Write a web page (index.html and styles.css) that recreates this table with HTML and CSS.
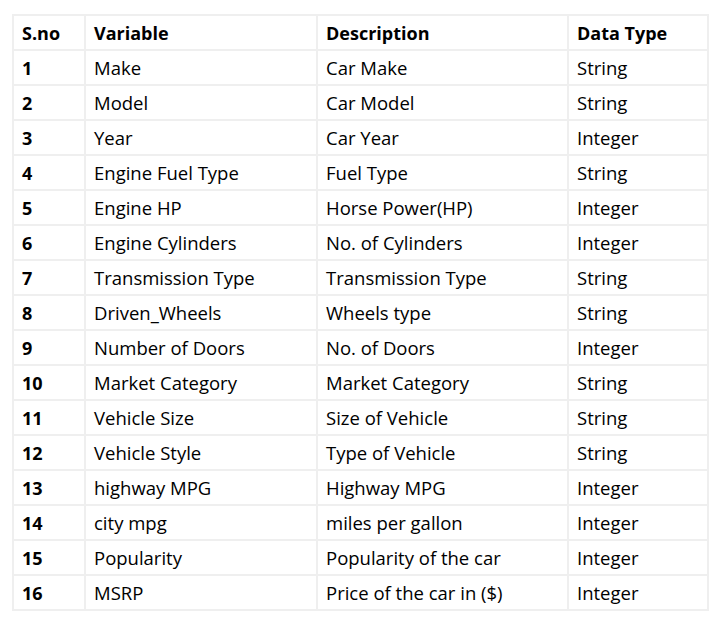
FILE: index.html
```html
<!DOCTYPE html>
<html>
<head>
<meta charset="utf-8">
<link rel="stylesheet" href="styles.css">
</head>
<body>
<table class="vars">
  <colgroup>
    <col class="c-sno"><col class="c-var"><col class="c-desc"><col class="c-type">
  </colgroup>
  <thead>
    <tr><th>S.no</th><th>Variable</th><th>Description</th><th>Data Type</th></tr>
  </thead>
  <tbody>
    <tr><td class="num">1</td><td>Make</td><td>Car Make</td><td>String</td></tr>
    <tr><td class="num">2</td><td>Model</td><td>Car Model</td><td>String</td></tr>
    <tr><td class="num">3</td><td>Year</td><td>Car Year</td><td>Integer</td></tr>
    <tr><td class="num">4</td><td>Engine Fuel Type</td><td>Fuel Type</td><td>String</td></tr>
    <tr><td class="num">5</td><td>Engine HP</td><td>Horse Power(HP)</td><td>Integer</td></tr>
    <tr><td class="num">6</td><td>Engine Cylinders</td><td>No. of Cylinders</td><td>Integer</td></tr>
    <tr><td class="num">7</td><td>Transmission Type</td><td>Transmission Type</td><td>String</td></tr>
    <tr><td class="num">8</td><td>Driven_Wheels</td><td>Wheels type</td><td>String</td></tr>
    <tr><td class="num">9</td><td>Number of Doors</td><td>No. of Doors</td><td>Integer</td></tr>
    <tr><td class="num">10</td><td>Market Category</td><td>Market Category</td><td>String</td></tr>
    <tr><td class="num">11</td><td>Vehicle Size</td><td>Size of Vehicle</td><td>String</td></tr>
    <tr><td class="num">12</td><td>Vehicle Style</td><td>Type of Vehicle</td><td>String</td></tr>
    <tr><td class="num">13</td><td>highway MPG</td><td>Highway MPG</td><td>Integer</td></tr>
    <tr><td class="num">14</td><td>city mpg</td><td>miles per gallon</td><td>Integer</td></tr>
    <tr><td class="num">15</td><td>Popularity</td><td>Popularity of the car</td><td>Integer</td></tr>
    <tr><td class="num">16</td><td>MSRP</td><td>Price of the car in ($)</td><td>Integer</td></tr>
  </tbody>
</table>
</body>
</html>
```
FILE: styles.css
```css
html, body {
  margin: 0;
  padding: 0;
  background: #ffffff;
}
body {
  padding: 14px 0 0 12px;
  font-family: "Open Sans", "Noto Sans", sans-serif;
  font-size: 18.5px;
  color: #000000;
}
.vars {
  border-collapse: collapse;
  table-layout: fixed;
  width: 695px;
}
.c-sno { width: 72px; }
.c-var { width: 232px; }
.c-desc { width: 251px; }
.c-type { width: 140px; }
.vars th, .vars td {
  border: 2px solid #efefef;
  height: 33px;
  padding: 0 0 0 8px;
  text-align: left;
  vertical-align: middle;
  white-space: nowrap;
  line-height: 22px;
}
.vars th {
  font-weight: 700;
  font-size: 18px;
}
.vars td.num {
  font-weight: 700;
  font-size: 18px;
}
```
